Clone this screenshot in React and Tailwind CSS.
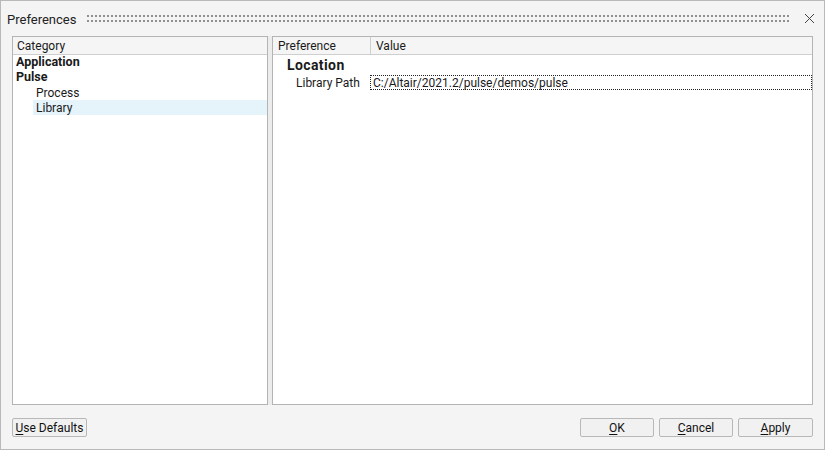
import React from "react";

const font = { fontFamily: 'Roboto, "Liberation Sans", Arial, sans-serif' };

function Grip() {
  return (
    <svg className="flex-1 h-[8px]" shapeRendering="crispEdges">
      <defs>
        <pattern id="dots" x="0" y="0" width="4" height="5" patternUnits="userSpaceOnUse">
          <rect x="0" y="0" width="2" height="2" fill="#8f8f8f" />
        </pattern>
      </defs>
      <rect x="0" y="0" width="100%" height="7" fill="url(#dots)" />
    </svg>
  );
}

function Btn({ u, rest, className = "" }) {
  return (
    <button
      className={
        "h-[19px] border border-[#b8b8b8] rounded-[2px] bg-[#f1f1f1] text-[12px] text-[#111] leading-none flex items-center justify-center " +
        className
      }
    >
      <span className="underline underline-offset-2">{u}</span>
      {rest}
    </button>
  );
}

export default function App() {
  return (
    <div
      className="w-[825px] h-[450px] border border-[#b9b9b9] bg-[#f4f4f4] flex flex-col text-[#1a1a1a]"
      style={font}
    >
      {/* title bar */}
      <div className="h-[35px] flex items-center pl-[6px] pr-[9px] gap-[11px]">
        <span className="text-[13px] text-[#222] pt-[2px]">Preferences</span>
        <div className="flex-1 flex items-center pt-[1px]">
          <Grip />
        </div>
        <svg width="11" height="11" viewBox="0 0 11 11" className="ml-[3px] mb-[1px]">
          <path d="M1 1 L10 10 M10 1 L1 10" stroke="#444" strokeWidth="1" />
        </svg>
      </div>

      {/* panels */}
      <div className="flex px-[11px] h-[369px]">
        <div className="w-[256px] border border-[#b4b4b4] bg-white flex flex-col">
          <div className="h-[18px] bg-[#f5f5f5] border-b border-[#cfcfcf] flex items-center pl-[4px] text-[12px]">
            Category
          </div>
          <div className="text-[12px]">
            <div className="h-[15px] flex items-center pl-[3px] font-bold text-[12.5px]">Application</div>
            <div className="h-[15px] flex items-center pl-[3px] font-bold text-[12.5px]">Pulse</div>
            <div className="h-[15px] flex items-center pl-[23px]">Process</div>
            <div className="h-[15px] flex items-center ml-[20px] pl-[3px] bg-[#e5f3fb]">Library</div>
          </div>
        </div>
        <div className="w-[4px] bg-[#ececec]" />
        <div className="flex-1 border border-[#b4b4b4] bg-white flex flex-col">
          <div className="h-[18px] bg-[#f5f5f5] border-b border-[#cfcfcf] flex text-[12px]">
            <div className="w-[98px] border-r border-[#cfcfcf] flex items-center pl-[5px]">Preference</div>
            <div className="flex items-center pl-[5px]">Value</div>
          </div>
          <div className="h-[20px] flex items-center pl-[14px] font-bold text-[14px] tracking-[0.4px]">
            Location
          </div>
          <div className="h-[15px] flex text-[12px]">
            <div className="w-[97px] flex items-center pl-[23px]">Library Path</div>
            <div className="flex-1 border border-dotted border-[#222] flex items-center pl-[2px]">
              C:/Altair/2021.2/pulse/demos/pulse
            </div>
          </div>
        </div>
      </div>

      {/* footer */}
      <div className="flex items-center px-[11px] mt-[13px]">
        <Btn u="U" rest="se Defaults" className="w-[75px]" />
        <div className="flex-1" />
        <div className="flex gap-[5px]">
          <Btn u="O" rest="K" className="w-[74px]" />
          <Btn u="C" rest="ancel" className="w-[74px]" />
          <Btn u="A" rest="pply" className="w-[75px]" />
        </div>
      </div>
    </div>
  );
}
